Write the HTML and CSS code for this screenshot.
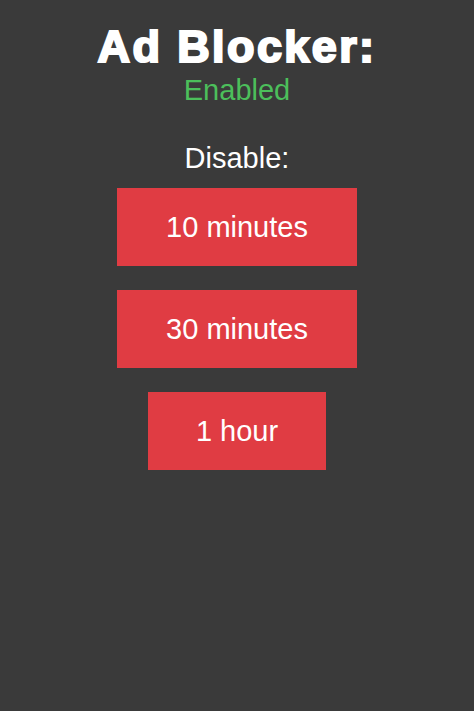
FILE: index.html
```html
<!DOCTYPE html>
<html lang="en">
<head>
    <meta charset="UTF-8">
    <meta name="viewport" content="width=device-width, initial-scale=1.0">
    <title>Ad Blocker</title>
    <link rel="stylesheet" href="styles.css">
</head>
<body>
    <main class="popup">
        <h1 class="title">Ad Blocker:</h1>
        <div class="status" id="status">Enabled</div>

        <div class="disable-label">Disable:</div>
        <div class="options">
            <button class="disable-btn" data-minutes="10">10 minutes</button>
            <button class="disable-btn" data-minutes="30">30 minutes</button>
            <button class="disable-btn" data-minutes="60">1 hour</button>
        </div>
    </main>
</body>
</html>
```

FILE: styles.css
```css
/* Popup */
body {
    margin: 0;
    padding: 0;
    background-color: #3a3a3a;
    font-family: "Liberation Sans", Arial, sans-serif;
    color: #ffffff;
    height: 100vh;
}

.popup {
    display: flex;
    flex-direction: column;
    align-items: center;
    text-align: center;
    padding-top: 22px;
}

.title {
    margin: 0;
    font-size: 45px;
    line-height: 50px;
    font-weight: bold;
    letter-spacing: 2.4px;
    -webkit-text-stroke: 2.2px #ffffff;
}

.status {
    margin-top: 1px;
    font-size: 29px;
    line-height: 34px;
    color: #4cbf5b;
}

.disable-label {
    margin-top: 34px;
    font-size: 29px;
    line-height: 34px;
}

.options {
    margin-top: 13px;
    display: flex;
    flex-direction: column;
    align-items: center;
    gap: 24px;
}

.disable-btn {
    font-family: inherit;
    font-size: 29px;
    line-height: 34px;
    padding: 22px 48px;
    background-color: #e03c43;
    color: #ffffff;
    border: none;
    cursor: pointer;
}

.disable-btn:nth-child(-n+2) {
    width: 240px;
}
```
